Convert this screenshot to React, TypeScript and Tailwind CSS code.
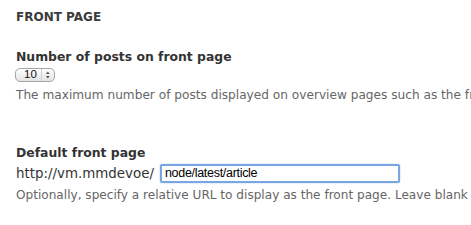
export default function App() {
  return (
    <div className="w-[471px] h-[225px] overflow-hidden bg-white whitespace-nowrap text-[#333]" style={{ fontFamily: '"DejaVu Sans", Verdana, sans-serif' }}>
      <div className="pl-4 pt-[10px]">
        <div className="text-[12px] font-bold leading-[14px] text-[#3b3b3b]">FRONT PAGE</div>
        <div className="mt-[25px] text-[12.4px] font-bold leading-[16px]">Number of posts on front page</div>
        <div className="mt-[3px] flex">
          <div className="-ml-px flex h-[14px] w-[40px] items-center rounded-[5px] border border-[#a5a5a5] bg-gradient-to-b from-white to-[#e4e4e4] text-[11.5px] leading-none" style={{ fontFamily: '"Liberation Sans", Arial, sans-serif' }}>
            <span className="ml-[8px] w-[18px] text-[#111]">10</span>
            <span className="h-full w-px bg-[#cfcfcf]" />
            <svg width="12" height="12" viewBox="0 0 12 12">
              <path d="M4 5 L6 2.5 L8 5 Z" fill="#555" />
              <path d="M4 7 L6 9.5 L8 7 Z" fill="#555" />
            </svg>
          </div>
        </div>
        <div className="mt-[5px] text-[12.15px] leading-[16px] text-[#666]">The maximum number of posts displayed on overview pages such as the front page.</div>
        <div className="mt-[42px] text-[12.4px] font-bold leading-[16px]">Default front page</div>
        <div className="mt-[3px] flex items-center">
          <span className="text-[13.4px] leading-[16px] text-[#333]">http://vm.mmdevoe/</span>
          <div className="ml-[6px] flex h-[19px] w-[240px] items-center rounded-[2px] border-2 border-[#79a6de] bg-white px-[3px] text-[12.5px] text-black shadow-[0_0_2px_#a8c8ef]" style={{ fontFamily: '"Liberation Sans", Arial, sans-serif' }}>
            <span className="tracking-[-0.3px]">node/latest/article</span>
          </div>
        </div>
        <div className="mt-[4px] text-[12.1px] leading-[16px] text-[#666]">Optionally, specify a relative URL to display as the front page. Leave blank to display the default front page.</div>
      </div>
    </div>
  );
}
